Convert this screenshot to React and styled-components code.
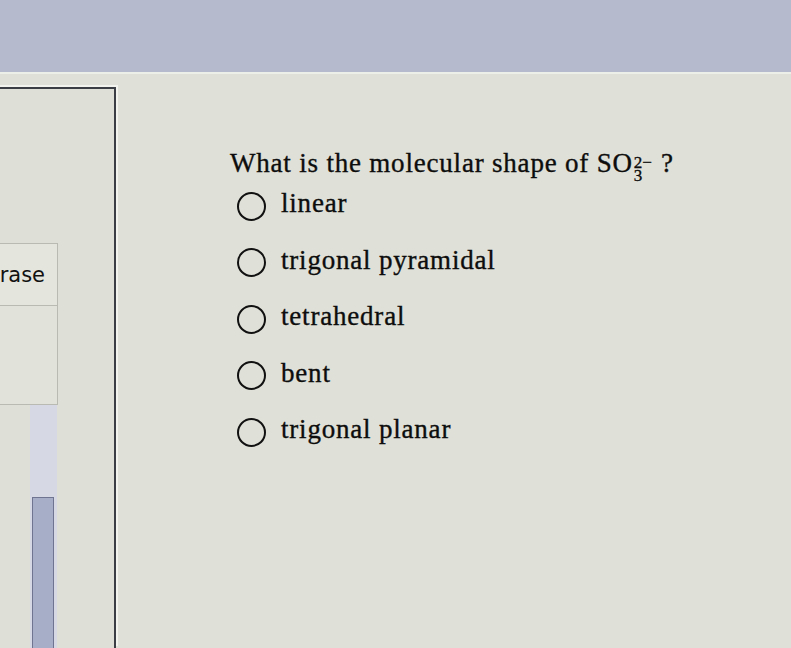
import React from 'react';
import styled, {createGlobalStyle} from 'styled-components';

const GlobalStyle = createGlobalStyle`
  html, body {
    margin: 0;
    padding: 0;
    background: #dfe0d7;
    overflow: hidden;
  }
`;

const Page = styled.div`
  display: flex;
  flex-direction: column;
  height: 648px;
  overflow: hidden;
`;

const TopBar = styled.div`
  height: 72px;
  flex-shrink: 0;
  background: #b5bbcc;
  border-bottom: 2px solid #eceee8;
`;

const Body = styled.div`
  flex: 1;
  display: flex;
  min-height: 0;
`;

const SidePanel = styled.div`
  width: 212px;
  margin-left: -100px;
  margin-top: 13px;
  border: 2px solid #3b3e45;
  border-bottom: none;
  box-shadow: 2px -2px 0 #f2f3ee;
  background: #dedfd6;
  display: flex;
  flex-direction: column;
  padding-top: 154px;
`;

const ToolColumn = styled.div`
  width: 156px;
  flex: 1;
  display: flex;
  flex-direction: column;
`;

const EraseButton = styled.div`
  height: 61px;
  flex-shrink: 0;
  border: 1px solid #b9bab2;
  background: #e4e5dd;
  display: flex;
  align-items: center;
  justify-content: flex-end;
  padding-right: 12px;
  font-family: "DejaVu Sans", sans-serif;
  font-size: 21px;
  color: #111;
`;

const ToolBox = styled.div`
  height: 98px;
  flex-shrink: 0;
  border: 1px solid #b9bab2;
  border-top: none;
  background: #e1e2da;
`;

const ScrollTrack = styled.div`
  flex: 1;
  align-self: flex-end;
  width: 27px;
  margin-right: 1px;
  background: #d6d9e4;
  display: flex;
  flex-direction: column;
`;

const ScrollThumb = styled.div`
  flex: 1;
  margin: 92px 3px 0 2px;
  background: #a7aec8;
  border: 1px solid #6f7590;
  border-bottom: none;
`;

const Main = styled.div`
  flex: 1;
  padding: 74px 0 0 114px;
  font-family: "Liberation Serif", "Times New Roman", serif;
  color: #0d0d0d;
  -webkit-text-stroke: 0.35px #0d0d0d;
`;

const Question = styled.div`
  height: 30px;
  font-size: 27px;
  line-height: 30px;
  letter-spacing: 0.8px;
  white-space: nowrap;
`;

const Stack = styled.span`
  display: inline-flex;
  flex-direction: column;
  font-size: 17px;
  line-height: 13px;
  letter-spacing: 0;
  margin: 0 9px 0 1px;
  vertical-align: 4px;
`;

const OptionList = styled.div`
  display: flex;
  flex-direction: column;
`;

const Option = styled.label`
  height: 56.5px;
  display: flex;
  align-items: center;
  gap: 15px;
  padding-left: 7px;
`;

const Radio = styled.span`
  width: 25px;
  height: 25px;
  border: 2.5px solid #111;
  border-radius: 50%;
  flex-shrink: 0;
`;

const OptionText = styled.span`
  font-size: 27px;
  line-height: 30px;
  letter-spacing: 0.8px;
  margin-top: -6px;
`;

const options = ['linear', 'trigonal pyramidal', 'tetrahedral', 'bent', 'trigonal planar'];

const App = () => (
  <>
    <GlobalStyle />
    <Page>
      <TopBar />
      <Body>
        <SidePanel>
          <ToolColumn>
            <EraseButton>Erase</EraseButton>
            <ToolBox />
            <ScrollTrack>
              <ScrollThumb />
            </ScrollTrack>
          </ToolColumn>
        </SidePanel>
        <Main>
          <Question>
            What is the molecular shape of SO
            <Stack>
              <span>2−</span>
              <span>3</span>
            </Stack>
            ?
          </Question>
          <OptionList>
            {options.map(opt => (
              <Option key={opt}>
                <Radio />
                <OptionText>{opt}</OptionText>
              </Option>
            ))}
          </OptionList>
        </Main>
      </Body>
    </Page>
  </>
);

export default App;
